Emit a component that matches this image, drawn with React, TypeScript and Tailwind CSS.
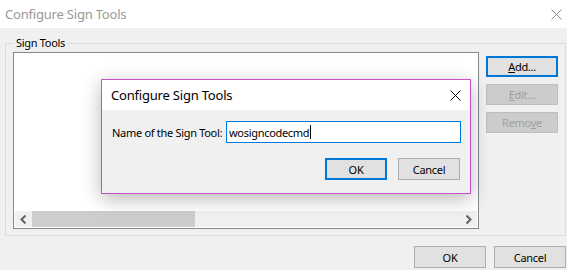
import React from "react";

const X = ({ color, className }: { color: string; className?: string }) => (
  <svg width="11" height="11" viewBox="0 0 11 11" className={className}>
    <path d="M0.5 0.5 L10.5 10.5 M10.5 0.5 L0.5 10.5" stroke={color} strokeWidth="1" fill="none" />
  </svg>
);

const Chevron = ({ dir }: { dir: "l" | "r" }) => (
  <svg width="7" height="9" viewBox="0 0 7 9">
    <path
      d={dir === "l" ? "M5.5 0.5 L1.5 4.5 L5.5 8.5" : "M1.5 0.5 L5.5 4.5 L1.5 8.5"}
      stroke="#606060"
      strokeWidth="2"
      fill="none"
    />
  </svg>
);

const font = "font-['Noto_Sans','Segoe_UI',sans-serif]";

export default function App() {
  return (
    <div className={`relative w-[567px] h-[270px] bg-[#f0f0f0] overflow-hidden text-black whitespace-nowrap ${font}`}>
      {/* Outer title bar */}
      <div className="h-[28px] bg-white flex items-center justify-between pl-[5px] pr-[4px]">
        <span className="text-[13px] text-[#999999] leading-none tracking-[-0.2px]">Configure Sign Tools</span>
        <X color="#8a8a8a" className="mr-[1px]" />
      </div>

      {/* Body */}
      <div className="flex flex-col pl-[5px] pr-[1px]">
        {/* Group box */}
        <div className="relative mt-[15px] w-[561px] h-[193px] border border-[#dcdcdc] flex">
          <span className="absolute left-[8px] top-[-9px] bg-[#f0f0f0] px-[2px] text-[11px] leading-[16px] tracking-[-0.3px]">
            Sign Tools
          </span>
          {/* List box */}
          <div className="ml-[7px] mt-[8px] w-[466px] h-[177px] border border-[#828790] bg-white p-[1px] flex flex-col justify-end">
            <div className="h-[16px] bg-[#f0f0f0] flex items-stretch">
              <div className="w-[17px] flex items-center justify-center">
                <Chevron dir="l" />
              </div>
              <div className="w-[163px] bg-[#cdcdcd]" />
              <div className="flex-1" />
              <div className="w-[17px] flex items-center justify-center">
                <Chevron dir="r" />
              </div>
            </div>
          </div>
          {/* Buttons column */}
          <div className="ml-[7px] mt-[12px] flex flex-col gap-[7px] text-[11px] tracking-[-0.3px]">
            <div className="w-[72px] h-[21px] border-2 border-[#0078d7] bg-[#e1e1e1] flex items-center justify-center leading-none">
              <span><u>A</u>dd...</span>
            </div>
            <div className="w-[72px] h-[21px] border border-[#bfbfbf] bg-[#cccccc] text-[#a0a0a0] flex items-center justify-center leading-none">
              <span><u>E</u>dit...</span>
            </div>
            <div className="w-[72px] h-[21px] border border-[#bfbfbf] bg-[#cccccc] text-[#a0a0a0] flex items-center justify-center leading-none">
              <span>Remo<u>v</u>e</span>
            </div>
          </div>
        </div>

        {/* Bottom buttons */}
        <div className="mt-[10px] flex justify-end gap-[8px] text-[11px] tracking-[-0.3px]">
          <div className="w-[72px] h-[22px] border border-[#adadad] bg-[#e1e1e1] flex items-center justify-center leading-none">OK</div>
          <div className="w-[72px] h-[22px] border border-[#adadad] bg-[#e1e1e1] flex items-center justify-center leading-none">Cancel</div>
        </div>
      </div>

      {/* Inner dialog (overlay) */}
      <div className="absolute left-[101px] top-[79px] w-[370px] h-[115px] border border-[#c94fc7] bg-[#f0f0f0] shadow-[0_5px_18px_rgba(0,0,0,0.28)] flex flex-col">
        <div className="h-[30px] bg-white flex items-center justify-between pl-[9px] pr-[9px]">
          <span className="text-[13px] leading-none tracking-[-0.2px]">Configure Sign Tools</span>
          <X color="#000000" />
        </div>
        <div className="flex flex-col pl-[10px] pr-[9px] text-[11px] tracking-[-0.3px]">
          <div className="mt-[11px] flex items-center justify-between">
            <span className="leading-none">Name of the Sign Tool:</span>
            <div className="w-[235px] h-[22px] border border-[#0078d7] bg-white flex items-center pl-[2px]">
              <span className="leading-none">wosigncodecmd</span>
              <span className="ml-[1px] w-[1px] h-[14px] bg-black" />
            </div>
          </div>
          <div className="mt-[15px] flex justify-end gap-[11px] pr-[1px]">
            <div className="w-[62px] h-[22px] border-2 border-[#0078d7] bg-[#e1e1e1] flex items-center justify-center leading-none">OK</div>
            <div className="w-[62px] h-[22px] border border-[#adadad] bg-[#e1e1e1] flex items-center justify-center leading-none">Cancel</div>
          </div>
        </div>
      </div>
    </div>
  );
}
